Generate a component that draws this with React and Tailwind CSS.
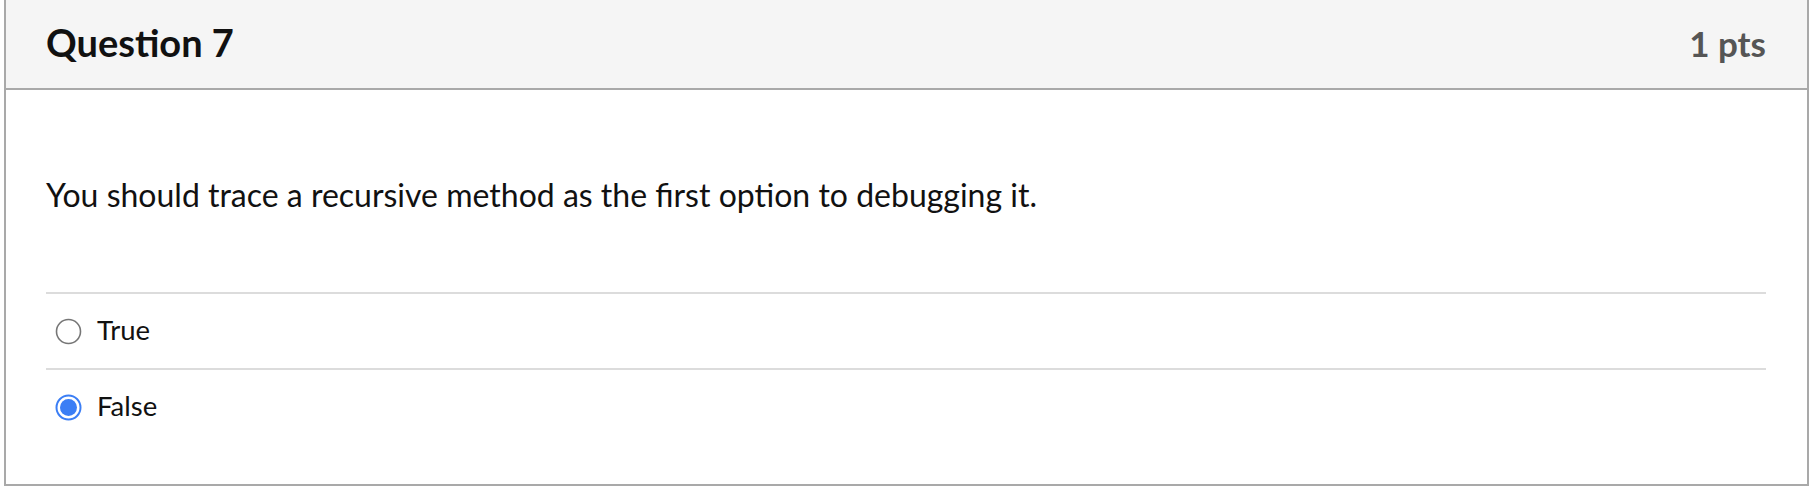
import React from "react";

function Radio({ checked }) {
  if (checked) {
    return (
      <svg width="27" height="27" viewBox="0 0 27 27" className="shrink-0">
        <circle cx="13.5" cy="13.5" r="12" fill="#ffffff" stroke="#3b7ef5" strokeWidth="2" />
        <circle cx="13.5" cy="13.5" r="8.5" fill="#3b7ef5" />
      </svg>
    );
  }
  return (
    <svg width="27" height="27" viewBox="0 0 27 27" className="shrink-0">
      <circle cx="13.5" cy="13.5" r="12" fill="#ffffff" stroke="#767676" strokeWidth="1.6" />
    </svg>
  );
}

export default function App() {
  const answers = [
    { label: "True", checked: false },
    { label: "False", checked: true },
  ];
  return (
    <div className="w-[1812px] h-[486px] bg-white pl-[4px] pr-[3px]" style={{ fontFamily: "Lato, 'Noto Sans', sans-serif" }}>
      <div className="h-[486px] border-x-2 border-b-2 border-[#a9a9a9] flex flex-col">
        <div className="h-[90px] shrink-0 bg-[#f5f5f5] border-b-2 border-[#a9a9a9] flex items-center justify-between pl-[40px] pr-[41px] pb-[2px]">
          <h2 className="text-[38px] leading-[1.2] font-bold text-[#111111]">Question 7</h2>
          <div className="text-[35px] leading-[1.2] font-bold text-[#555555]">1 pts</div>
        </div>
        <div className="pl-[40px] pr-[41px] pt-[81px]">
          <p className="text-[32px] leading-[48px] text-[#111111]">
            You should trace a recursive method as the first option to debugging it.
          </p>
          <div className="mt-[73px]">
            {answers.map((a) => (
              <div key={a.label} className="border-t-2 border-[#dcdcdc] h-[76px] flex items-center gap-[15px] pl-[9px]">
                <Radio checked={a.checked} />
                <span className="text-[27.5px] leading-[1.2] text-[#111111] mb-[4px]">{a.label}</span>
              </div>
            ))}
          </div>
        </div>
      </div>
    </div>
  );
}
